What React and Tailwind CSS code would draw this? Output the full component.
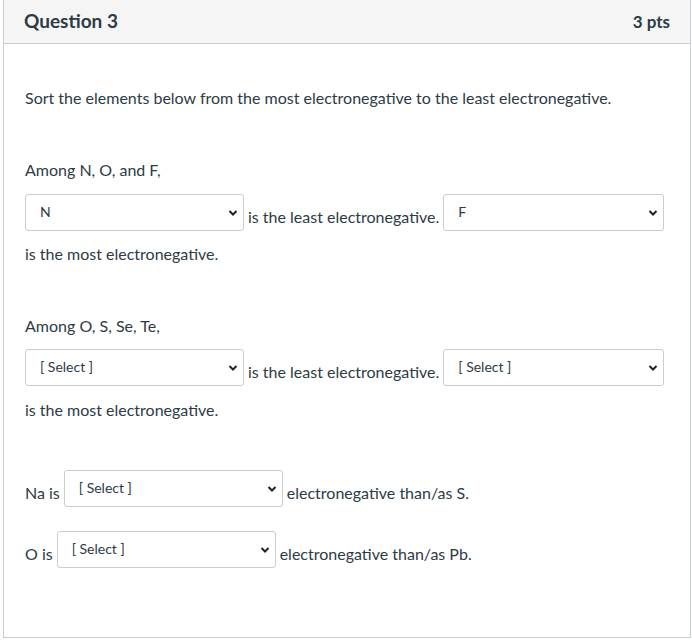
const Chev = () => (
  <svg width="10" height="8" viewBox="0 0 10 8" className="absolute right-[5px] top-[14px]">
    <path d="M1.5 2 L5 5.5 L8.5 2" stroke="#222" strokeWidth="2" fill="none" />
  </svg>
);
const Sel = ({ v, w = "w-[219px]" }) => (
  <div className={`relative ${w} h-[37px] shrink-0 border border-[#c7cdd1] rounded-[3px] bg-white flex items-center pl-[14px] pb-[2px] text-[14px] text-[#2d3b45]`}>
    <span>{v}</span>
    <Chev />
  </div>
);
export default function App() {
  return (
    <div className="w-[692px] h-[641px] bg-white" style={{ fontFamily: "Lato, 'Liberation Sans', sans-serif" }}>
      <div className="ml-[3px] w-[688px] h-[638px] border border-t-0 border-[#c7cdd1] text-[#2d3b45] text-[16px]">
        <div className="h-[44px] bg-[#f5f5f5] border-b border-[#c7cdd1] flex items-center justify-between px-[20px]">
          <span className="text-[19px] font-bold">Question 3</span>
          <span className="text-[17px] font-bold">3 pts</span>
        </div>
        <div className="pl-[21px] pr-[26px]">
          <div className="mt-[44px] leading-[20px]">Sort the elements below from the most electronegative to the least electronegative.</div>
          <div className="mt-[52px] leading-[20px]">Among N, O, and F,</div>
          <div className="mt-[14px] flex items-center">
            <Sel v="N" />
            <span className="mx-[4px] pt-[8px] whitespace-nowrap">is the least electronegative.</span>
            <Sel v="F" w="w-[219px] flex-1" />
          </div>
          <div className="mt-[13px] leading-[20px]">is the most electronegative.</div>
          <div className="mt-[52px] leading-[20px]">Among O, S, Se, Te,</div>
          <div className="mt-[13px] flex items-center">
            <Sel v="[ Select ]" />
            <span className="mx-[4px] pt-[8px] whitespace-nowrap">is the least electronegative.</span>
            <Sel v="[ Select ]" w="w-[219px] flex-1" />
          </div>
          <div className="mt-[14px] leading-[20px]">is the most electronegative.</div>
          <div className="mt-[50px] flex items-center">
            <span className="mr-[4px] pt-[8px]">Na is</span>
            <Sel v="[ Select ]" />
            <span className="ml-[4px] pt-[8px]">electronegative than/as S.</span>
          </div>
          <div className="mt-[24px] flex items-center">
            <span className="mr-[4px] pt-[8px]">O is</span>
            <Sel v="[ Select ]" />
            <span className="ml-[4px] pt-[8px]">electronegative than/as Pb.</span>
          </div>
        </div>
      </div>
    </div>
  );
}
